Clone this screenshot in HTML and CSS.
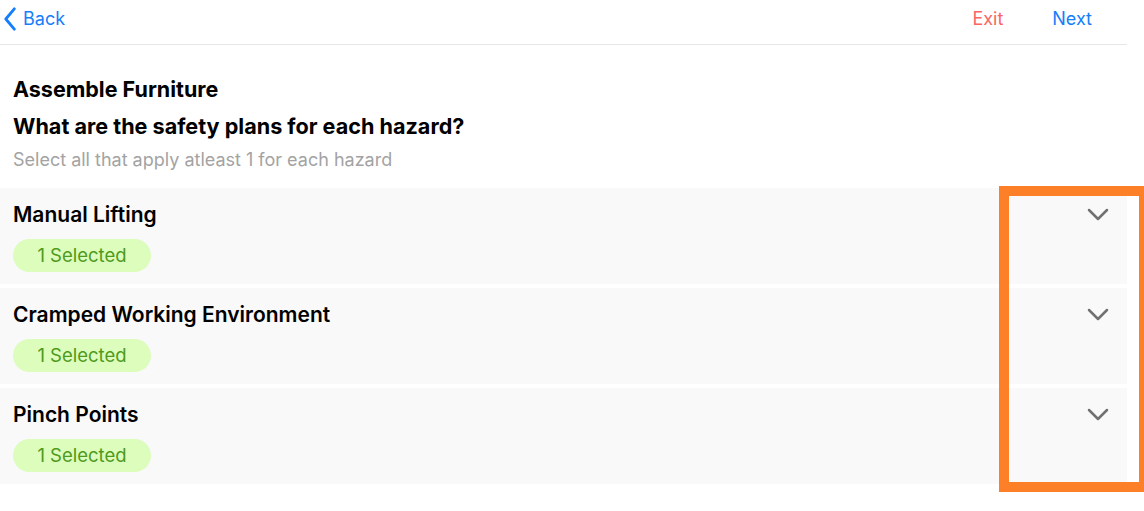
FILE: index.html
```html
<!DOCTYPE html>
<html lang="en">
<head>
    <meta charset="UTF-8">
    <meta name="viewport" content="width=device-width, initial-scale=1.0">
    <title>Safety Plans</title>
    <link rel="stylesheet" href="styles.css">
</head>
<body>
    <div class="screen">
        <div class="nav-bar">
            <a class="nav-back" href="#">
                <svg class="back-icon" width="12" height="24" viewBox="0 0 12 24">
                    <path d="M10.3 1.8 L1.8 12 L10.3 22.2" fill="none" stroke="#147efb" stroke-width="2.8" stroke-linecap="round" stroke-linejoin="round"/>
                </svg>
                Back
            </a>
            <div class="nav-actions">
                <a class="nav-exit" href="#">Exit</a>
                <a class="nav-next" href="#">Next</a>
            </div>
        </div>

        <div class="intro">
            <h1 class="task-title">Assemble Furniture</h1>
            <h2 class="question">What are the safety plans for each hazard?</h2>
            <p class="hint">Select all that apply atleast 1 for each hazard</p>
        </div>

        <div class="hazard-list">
            <div class="hazard-row">
                <div class="hazard-info">
                    <div class="hazard-name">Manual Lifting</div>
                    <span class="pill">1 Selected</span>
                </div>
                <svg class="chevron" width="24" height="14" viewBox="0 0 24 14">
                    <path d="M3 2 L12 11 L21 2" fill="none" stroke="#717171" stroke-width="2.5" stroke-linecap="round" stroke-linejoin="round"/>
                </svg>
            </div>
            <div class="hazard-row">
                <div class="hazard-info">
                    <div class="hazard-name">Cramped Working Environment</div>
                    <span class="pill">1 Selected</span>
                </div>
                <svg class="chevron" width="24" height="14" viewBox="0 0 24 14">
                    <path d="M3 2 L12 11 L21 2" fill="none" stroke="#717171" stroke-width="2.5" stroke-linecap="round" stroke-linejoin="round"/>
                </svg>
            </div>
            <div class="hazard-row">
                <div class="hazard-info">
                    <div class="hazard-name">Pinch Points</div>
                    <span class="pill">1 Selected</span>
                </div>
                <svg class="chevron" width="24" height="14" viewBox="0 0 24 14">
                    <path d="M3 2 L12 11 L21 2" fill="none" stroke="#717171" stroke-width="2.5" stroke-linecap="round" stroke-linejoin="round"/>
                </svg>
            </div>
        </div>
    </div>

    <div class="highlight"></div>
</body>
</html>
```

FILE: styles.css
```css
html, body {
    height: 100%;
}

body {
    margin: 0;
    background-color: #fff;
    font-family: Inter, "Liberation Sans", Arial, sans-serif;
    color: #000;
    position: relative;
    overflow: hidden;
}

.screen {
    width: 1127px;
}

.nav-bar {
    display: flex;
    justify-content: space-between;
    align-items: flex-start;
    height: 45px;
    box-sizing: border-box;
    padding-top: 6px;
    border-bottom: 1px solid #e6e6e6;
}

.nav-bar a {
    text-decoration: none;
    font-size: 18px;
    line-height: 22px;
}

.nav-back {
    display: flex;
    align-items: center;
    gap: 7px;
    padding-left: 4px;
    color: #147efb;
}

.back-icon {
    margin-top: 1px;
}

.nav-actions {
    display: flex;
    gap: 49px;
    padding-top: 2px;
    padding-right: 35px;
}

.nav-exit {
    color: #fc6563;
}

.nav-next {
    color: #147efb;
}

.intro {
    padding: 32px 13px 17px;
}

.task-title {
    margin: 0;
    font-size: 21.5px;
    font-weight: 700;
    line-height: 25px;
}

.question {
    margin: 12px 0 0;
    font-size: 21.6px;
    font-weight: 700;
    line-height: 25px;
}

.hint {
    margin: 10px 0 0;
    font-size: 18px;
    color: #a3a3a3;
    line-height: 22px;
}

.hazard-list {
    display: flex;
    flex-direction: column;
    gap: 4px;
}

.hazard-row {
    display: flex;
    justify-content: space-between;
    align-items: flex-start;
    height: 96px;
    box-sizing: border-box;
    padding: 14px 17px 0 13px;
    background-color: #f9f9f9;
}

.hazard-info {
    display: flex;
    flex-direction: column;
    align-items: flex-start;
}

.hazard-name {
    font-size: 21px;
    font-weight: 600;
    line-height: 25px;
}

.pill {
    display: block;
    margin-top: 12px;
    width: 138px;
    height: 33px;
    line-height: 33px;
    border-radius: 17px;
    background-color: #dcfdbb;
    color: #4f9a1d;
    font-size: 18.5px;
    text-align: center;
}

.chevron {
    margin-top: 6px;
}

.highlight {
    position: absolute;
    left: 999px;
    top: 186px;
    width: 145px;
    height: 306px;
    box-sizing: border-box;
    border: 10px solid #fd7f27;
    border-right-width: 5px;
}
```
